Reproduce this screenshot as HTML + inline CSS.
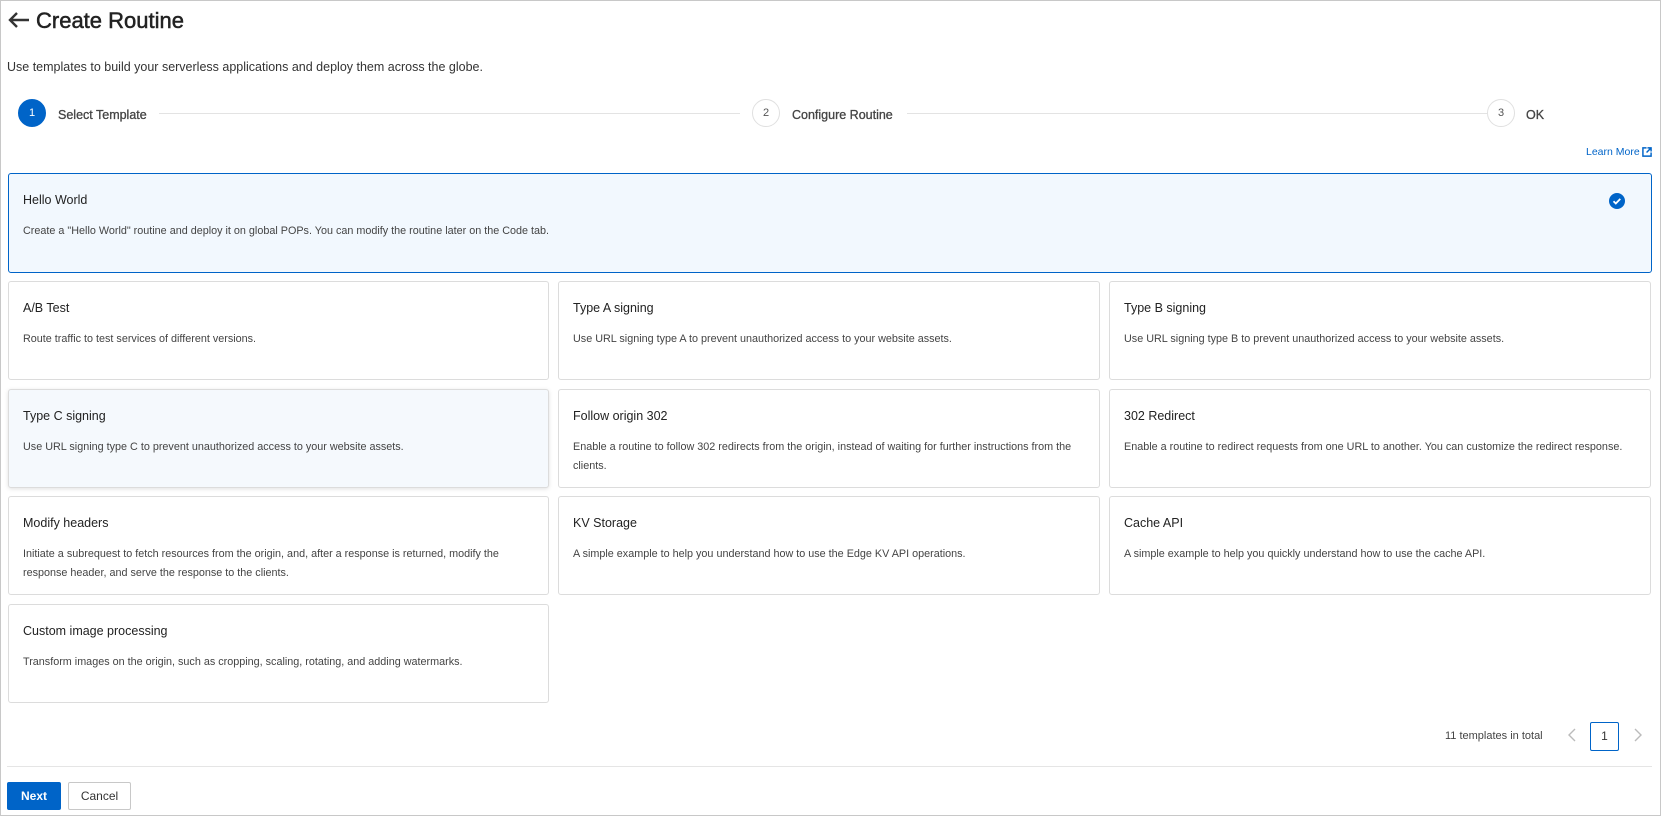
<!DOCTYPE html>
<html><head><meta charset="utf-8"><style>
*{box-sizing:border-box;margin:0;padding:0}
body{width:1661px;height:816px;overflow:hidden;background:#fff;font-family:"Liberation Sans",sans-serif;color:#333}
.frame{position:absolute;left:0;top:0;width:1661px;height:816px;border:1px solid #c8c8c8}
.abs{position:absolute}
.title{left:36px;top:6px;font-size:22px;color:#222;line-height:30px;-webkit-text-stroke:0.5px #222}
.desc{left:7px;top:58px;font-size:12.5px;color:#333;line-height:18px}
.circ{width:28px;height:28px;border-radius:50%;border:1px solid #e0e0e0;font-size:11px;line-height:26px;text-align:center;color:#555;background:#fff}
.circ.on{background:#0064c8;border-color:#0064c8;color:#fff}
.lbl{font-size:12.5px;color:#444;line-height:18px;top:106px;-webkit-text-stroke:0.3px #444}
.line{height:1px;background:#e3e3e3;top:113px}
.card{position:absolute;border:1px solid #dcdcdc;border-radius:3px;background:#fff;padding:0 14px}
.card h4{font-weight:normal;font-size:12.5px;color:#222;position:absolute;left:14px;top:17px;line-height:18px}
.card p{font-size:10.8px;color:#444;position:absolute;left:14px;right:14px;top:48px;line-height:19px}
.sel{border-color:#0064c8;background:#f2f8fe}
.hov{background:#f5f9fd;box-shadow:0 1px 4px rgba(0,0,0,.12)}
.btn{position:absolute;top:782px;height:28px;font-size:12px;line-height:26px;text-align:center;border-radius:2px}
</style></head><body>
<div class="frame"></div>
<svg class="abs" style="left:7px;top:10px" width="24" height="20" viewBox="0 0 24 20"><path d="M22 10H3M10 3L3 10l7 7" fill="none" stroke="#333" stroke-width="2.4"/></svg>
<div class="abs title">Create Routine</div>
<div class="abs desc">Use templates to build your serverless applications and deploy them across the globe.</div>

<div class="abs circ on" style="left:18px;top:99px">1</div>
<div class="abs lbl" style="left:58px">Select Template</div>
<div class="abs line" style="left:159px;width:581px"></div>
<div class="abs circ" style="left:752px;top:99px">2</div>
<div class="abs lbl" style="left:792px">Configure Routine</div>
<div class="abs line" style="left:907px;width:580px"></div>
<div class="abs circ" style="left:1487px;top:99px">3</div>
<div class="abs lbl" style="left:1526px">OK</div>

<div class="abs" style="left:1586px;top:146px;font-size:10.5px;color:#0064c8">Learn More</div>
<svg class="abs" style="left:1642px;top:147px" width="10" height="10" viewBox="0 0 11 11"><path d="M5 1H1v9h9V6" fill="none" stroke="#0064c8" stroke-width="1.6"/><path d="M6 1h4v4M10 1L5 6" fill="none" stroke="#0064c8" stroke-width="1.6"/></svg>

<div class="card sel" style="left:8px;top:173px;width:1644px;height:100px"><h4>Hello World</h4><p>Create a "Hello World" routine and deploy it on global POPs. You can modify the routine later on the Code tab.</p>
<svg class="abs" style="right:26px;top:19px" width="16" height="16" viewBox="0 0 16 16"><circle cx="8" cy="8" r="8" fill="#0064c8"/><path d="M4.5 8.2l2.3 2.3 4.5-4.6" fill="none" stroke="#fff" stroke-width="1.8"/></svg></div>

<div class="card" style="left:8px;top:281px;width:541px;height:99px"><h4>A/B Test</h4><p>Route traffic to test services of different versions.</p></div>
<div class="card" style="left:558px;top:281px;width:542px;height:99px"><h4>Type A signing</h4><p>Use URL signing type A to prevent unauthorized access to your website assets.</p></div>
<div class="card" style="left:1109px;top:281px;width:542px;height:99px"><h4>Type B signing</h4><p>Use URL signing type B to prevent unauthorized access to your website assets.</p></div>

<div class="card hov" style="left:8px;top:389px;width:541px;height:99px"><h4>Type C signing</h4><p>Use URL signing type C to prevent unauthorized access to your website assets.</p></div>
<div class="card" style="left:558px;top:389px;width:542px;height:99px"><h4>Follow origin 302</h4><p>Enable a routine to follow 302 redirects from the origin, instead of waiting for further instructions from the clients.</p></div>
<div class="card" style="left:1109px;top:389px;width:542px;height:99px"><h4>302 Redirect</h4><p>Enable a routine to redirect requests from one URL to another. You can customize the redirect response.</p></div>

<div class="card" style="left:8px;top:496px;width:541px;height:99px"><h4>Modify headers</h4><p>Initiate a subrequest to fetch resources from the origin, and, after a response is returned, modify the response header, and serve the response to the clients.</p></div>
<div class="card" style="left:558px;top:496px;width:542px;height:99px"><h4>KV Storage</h4><p>A simple example to help you understand how to use the Edge KV API operations.</p></div>
<div class="card" style="left:1109px;top:496px;width:542px;height:99px"><h4>Cache API</h4><p>A simple example to help you quickly understand how to use the cache API.</p></div>

<div class="card" style="left:8px;top:604px;width:541px;height:99px"><h4>Custom image processing</h4><p>Transform images on the origin, such as cropping, scaling, rotating, and adding watermarks.</p></div>

<div class="abs" style="left:1445px;top:730px;font-size:11px;color:#444">11 templates in total</div>
<svg class="abs" style="left:1567px;top:727px" width="10" height="16" viewBox="0 0 10 16"><path d="M8 2L2 8l6 6" fill="none" stroke="#bbb" stroke-width="1.4"/></svg>
<div class="abs" style="left:1590px;top:722px;width:29px;height:29px;border:1px solid #0064c8;border-radius:2px;font-size:12px;line-height:27px;text-align:center;color:#333">1</div>
<svg class="abs" style="left:1633px;top:727px" width="10" height="16" viewBox="0 0 10 16"><path d="M2 2l6 6-6 6" fill="none" stroke="#bbb" stroke-width="1.4"/></svg>

<div class="abs" style="left:7px;top:766px;width:1645px;height:1px;background:#e5e5e5"></div>
<div class="btn" style="left:7px;width:54px;background:#0064c8;color:#fff;font-weight:bold;border:1px solid #0064c8">Next</div>
<div class="btn" style="left:68px;width:63px;background:#fff;color:#333;border:1px solid #c8c8c8">Cancel</div>
</body></html>
